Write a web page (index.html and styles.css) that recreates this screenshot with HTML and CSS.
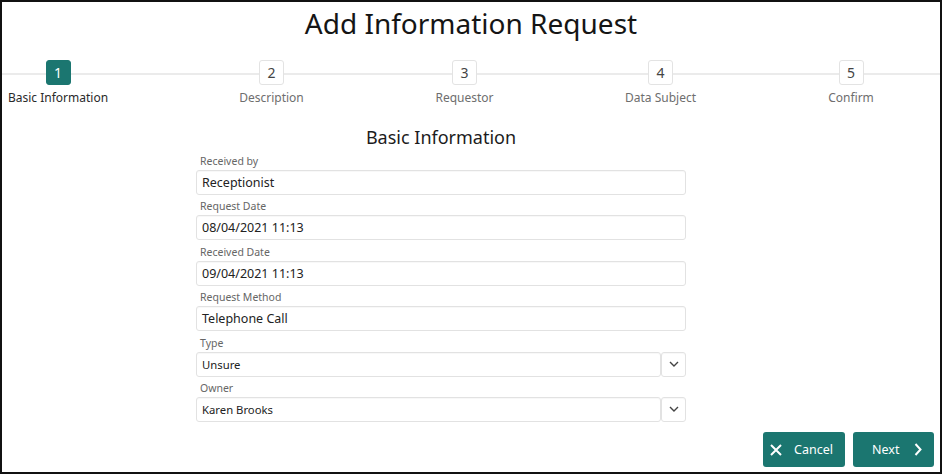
FILE: index.html
```html
<!DOCTYPE html>
<html lang="en">
<head>
    <meta charset="UTF-8">
    <meta name="viewport" content="width=device-width, initial-scale=1.0">
    <title>Add Information Request</title>
    <link rel="stylesheet" href="styles.css">
</head>
<body>
    <div class="frame">
        <h1 class="page-title">Add Information Request</h1>

        <!-- Steps -->
        <div class="stepper">
            <div class="step active" style="width: 100px">
                <div class="step-num">1</div>
                <div class="step-label">Basic Information</div>
            </div>
            <div class="step" style="width: 67px">
                <div class="step-num">2</div>
                <div class="step-label">Description</div>
            </div>
            <div class="step" style="width: 59px">
                <div class="step-num">3</div>
                <div class="step-label">Requestor</div>
            </div>
            <div class="step" style="width: 73px">
                <div class="step-num">4</div>
                <div class="step-label">Data Subject</div>
            </div>
            <div class="step" style="width: 48px">
                <div class="step-num">5</div>
                <div class="step-label">Confirm</div>
            </div>
        </div>

        <!-- Form -->
        <div class="form">
            <h2 class="form-title">Basic Information</h2>

            <div class="field">
                <label>Received by</label>
                <div class="input">Receptionist</div>
            </div>
            <div class="field">
                <label>Request Date</label>
                <div class="input">08/04/2021 11:13</div>
            </div>
            <div class="field">
                <label>Received Date</label>
                <div class="input">09/04/2021 11:13</div>
            </div>
            <div class="field">
                <label>Request Method</label>
                <div class="input">Telephone Call</div>
            </div>
            <div class="field">
                <label>Type</label>
                <div class="select">
                    <div class="select-value">Unsure</div>
                    <div class="select-btn">
                        <svg width="10" height="6" viewBox="0 0 10 6"><path d="M1 1l4 4 4-4" fill="none" stroke="#444" stroke-width="1.4"/></svg>
                    </div>
                </div>
            </div>
            <div class="field">
                <label>Owner</label>
                <div class="select">
                    <div class="select-value">Karen Brooks</div>
                    <div class="select-btn">
                        <svg width="10" height="6" viewBox="0 0 10 6"><path d="M1 1l4 4 4-4" fill="none" stroke="#444" stroke-width="1.4"/></svg>
                    </div>
                </div>
            </div>
        </div>

        <!-- Buttons -->
        <div class="actions">
            <button class="btn">
                <svg width="12" height="12" viewBox="0 0 12 12"><path d="M1 1l10 10M11 1L1 11" stroke="#fff" stroke-width="2"/></svg>
                <span>Cancel</span>
            </button>
            <button class="btn">
                <span>Next</span>
                <svg width="8" height="13" viewBox="0 0 8 13"><path d="M1.5 1l5 5.5-5 5.5" fill="none" stroke="#fff" stroke-width="2"/></svg>
            </button>
        </div>
    </div>
</body>
</html>
```

FILE: styles.css
```css
body {
    margin: 0;
    font-family: "Noto Sans", Arial, sans-serif;
    background-color: #fff;
    color: #222;
}
.frame {
    width: 942px;
    height: 474px;
    box-sizing: border-box;
    border: 2px solid #111;
    display: flex;
    flex-direction: column;
}
.page-title {
    margin: 2px 0 0;
    font-size: 28px;
    font-weight: 400;
    line-height: 38px;
    text-align: center;
    color: #151515;
}
.stepper {
    position: relative;
    display: flex;
    gap: 130px;
    padding-left: 6px;
    margin-top: 18px;
}
.stepper::before {
    content: "";
    position: absolute;
    left: 0;
    right: 0;
    top: 13px;
    height: 2px;
    background-color: #ebebeb;
}
.step {
    position: relative;
    display: flex;
    flex-direction: column;
    align-items: center;
}
.step-num {
    width: 25px;
    height: 25px;
    box-sizing: border-box;
    border: 1px solid #e3e3e3;
    border-radius: 3px;
    background-color: #fff;
    font-size: 14px;
    line-height: 23px;
    text-align: center;
    color: #444;
}
.step.active .step-num {
    background-color: #1b7670;
    border-color: #1b7670;
    color: #fff;
}
.step-label {
    margin-top: 5px;
    white-space: nowrap;
    font-size: 12px;
    line-height: 16px;
    color: #6e6e6e;
}
.step.active .step-label {
    color: #2a2a2a;
}
.form {
    width: 490px;
    margin: 19px 0 0 194px;
}
.form-title {
    margin: 0 0 5px;
    font-size: 18px;
    font-weight: 400;
    line-height: 24px;
    text-align: center;
    color: #1c1c1c;
}
.field {
    margin-bottom: 4.4px;
}
.field label {
    display: block;
    padding-left: 4px;
    font-size: 10.5px;
    line-height: 14px;
    margin-bottom: 2px;
    color: #666;
}
.input, .select-value, .select-btn {
    height: 25px;
    box-sizing: border-box;
    border: 1px solid #e2e2e2;
    border-radius: 3px;
    box-shadow: inset 0 1px 1px rgba(0, 0, 0, 0.03);
}
.input {
    padding-left: 5px;
    font-size: 12.5px;
    line-height: 23px;
    color: #222;
}
.select {
    display: flex;
}
.select-value {
    flex: 1;
    padding-left: 5px;
    font-size: 11.3px;
    line-height: 23px;
    color: #222;
}
.select-btn {
    width: 25px;
    display: flex;
    align-items: center;
    justify-content: center;
}
.actions {
    margin-top: auto;
    display: flex;
    justify-content: flex-end;
    gap: 8px;
    padding: 0 6px 5px 0;
}
.btn {
    width: 82px;
    height: 35px;
    display: flex;
    align-items: center;
    justify-content: space-between;
    padding: 0 12px 0 7px;
    border: none;
    border-radius: 3px;
    background-color: #1b7670;
    color: #fff;
    font-family: inherit;
    font-size: 12.5px;
    cursor: pointer;
}
.btn:last-child {
    width: 81px;
    padding: 0 12px 0 19px;
}
```
